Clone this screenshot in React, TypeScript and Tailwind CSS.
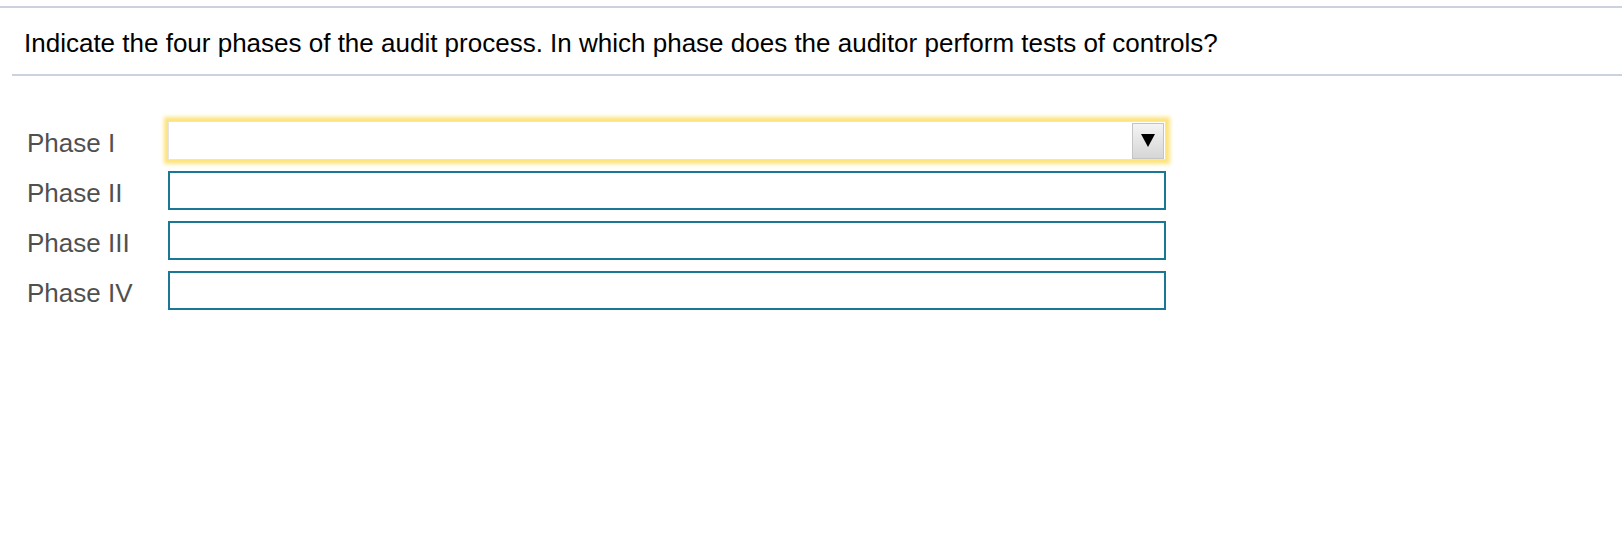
import React from "react";

const rows = ["Phase I", "Phase II", "Phase III", "Phase IV"];

export default function App() {
  return (
    <div className="w-[1622px] h-[536px] bg-white pt-[6px] font-['Liberation_Sans',Arial,sans-serif]">
      <div className="border-t-2 border-[#cbd1dd]" />
      <div className="ml-[12px] border-b-2 border-[#cbd1dd] pl-[12px] pt-[20px] pb-[16px]">
        <p className="text-[26px] leading-[30px] text-[#000]">
          Indicate the four phases of the audit process. In which phase does the auditor perform tests of controls?
        </p>
      </div>
      <div className="pl-[27px] pt-[45px] flex flex-col gap-[11px]">
        {rows.map((label, i) => (
          <div key={label} className="flex items-start">
            <div className="w-[141px] mt-[7px] text-[26px] leading-[30px] text-[#505050]">{label}</div>
            {i === 0 ? (
              <div className="w-[998px] h-[39px] bg-white border border-[#e4e4e4] shadow-[0_0_4px_4px_#fde37a] flex justify-end items-center pr-px">
                <div className="w-[32px] h-[36px] border border-[#c4c4c4] bg-gradient-to-b from-[#f4f4f4] to-[#d6d6d6] flex items-center justify-center">
                  <svg width="14" height="13" viewBox="0 0 14 13">
                    <polygon points="0,0 14,0 7,13" fill="#000" />
                  </svg>
                </div>
              </div>
            ) : (
              <div className="w-[998px] h-[39px] bg-white border-2 border-[#1a7896]" />
            )}
          </div>
        ))}
      </div>
    </div>
  );
}
